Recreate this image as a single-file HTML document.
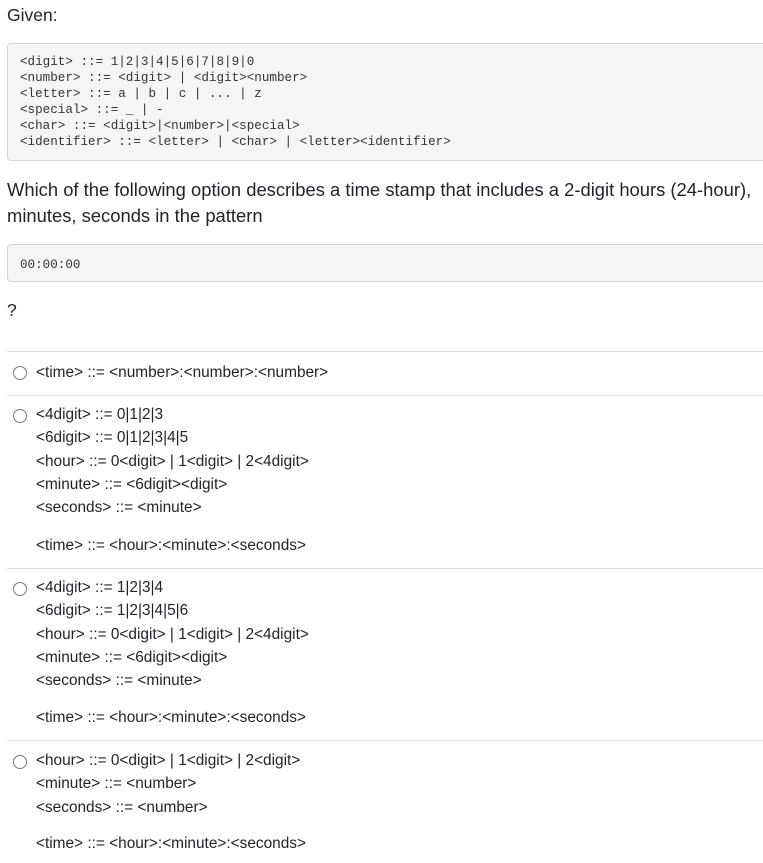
<!DOCTYPE html>
<html><head><meta charset="utf-8"><style>
body{margin:0;background:#fff;color:#212529;font-family:"Liberation Sans",sans-serif;width:763px;height:863px;overflow:hidden;position:relative}
.a{position:absolute;white-space:pre}
.t{font-size:17.5px;left:7px}
.box{position:absolute;left:7px;width:770px;background:#f5f5f5;border:1px solid #d4d4d4;border-radius:4px;box-sizing:border-box}
.code{font-family:"Liberation Mono",monospace;font-size:12.6px;line-height:16px;color:#333;position:absolute;left:12px;white-space:pre}
.hr{position:absolute;left:7px;width:756px;height:1px;background:#dedede}
.o{position:absolute;left:36px;font-size:15.4px;line-height:23.3px;white-space:pre;color:#212529}
.r{position:absolute;left:13px;width:12px;height:12px;border:1.2px solid #777;border-radius:50%}
</style></head><body>
<div class="a t" style="top:5px">Given:</div>
<div class="box" style="top:43px;height:118px"><div class="code" style="top:10px">&lt;digit&gt; ::= 1|2|3|4|5|6|7|8|9|0
&lt;number&gt; ::= &lt;digit&gt; | &lt;digit&gt;&lt;number&gt;
&lt;letter&gt; ::= a | b | c | ... | z
&lt;special&gt; ::= _ | -
&lt;char&gt; ::= &lt;digit&gt;|&lt;number&gt;|&lt;special&gt;
&lt;identifier&gt; ::= &lt;letter&gt; | &lt;char&gt; | &lt;letter&gt;&lt;identifier&gt;</div></div>
<div class="a t" style="top:177px;line-height:26px;font-size:18.4px">Which of the following option describes a time stamp that includes a 2-digit hours (24-hour),
minutes, seconds in the pattern</div>
<div class="box" style="top:244px;height:38px"><div class="code" style="top:12px">00:00:00</div></div>
<div class="a t" style="top:300px">?</div>
<div class="hr" style="top:351px"></div>
<div class="r" style="top:366px"></div>
<div class="o" style="top:361px">&lt;time&gt; ::= &lt;number&gt;:&lt;number&gt;:&lt;number&gt;</div>
<div class="hr" style="top:395px"></div>
<div class="r" style="top:409px"></div>
<div class="o" style="top:403px">&lt;4digit&gt; ::= 0|1|2|3
&lt;6digit&gt; ::= 0|1|2|3|4|5
&lt;hour&gt; ::= 0&lt;digit&gt; | 1&lt;digit&gt; | 2&lt;4digit&gt;
&lt;minute&gt; ::= &lt;6digit&gt;&lt;digit&gt;
&lt;seconds&gt; ::= &lt;minute&gt;</div>
<div class="o" style="top:534px">&lt;time&gt; ::= &lt;hour&gt;:&lt;minute&gt;:&lt;seconds&gt;</div>
<div class="hr" style="top:568px"></div>
<div class="r" style="top:582px"></div>
<div class="o" style="top:576px">&lt;4digit&gt; ::= 1|2|3|4
&lt;6digit&gt; ::= 1|2|3|4|5|6
&lt;hour&gt; ::= 0&lt;digit&gt; | 1&lt;digit&gt; | 2&lt;4digit&gt;
&lt;minute&gt; ::= &lt;6digit&gt;&lt;digit&gt;
&lt;seconds&gt; ::= &lt;minute&gt;</div>
<div class="o" style="top:706px">&lt;time&gt; ::= &lt;hour&gt;:&lt;minute&gt;:&lt;seconds&gt;</div>
<div class="hr" style="top:740px"></div>
<div class="r" style="top:755px"></div>
<div class="o" style="top:749px">&lt;hour&gt; ::= 0&lt;digit&gt; | 1&lt;digit&gt; | 2&lt;digit&gt;
&lt;minute&gt; ::= &lt;number&gt;
&lt;seconds&gt; ::= &lt;number&gt;</div>
<div class="o" style="top:832px">&lt;time&gt; ::= &lt;hour&gt;:&lt;minute&gt;:&lt;seconds&gt;</div>
</body></html>
